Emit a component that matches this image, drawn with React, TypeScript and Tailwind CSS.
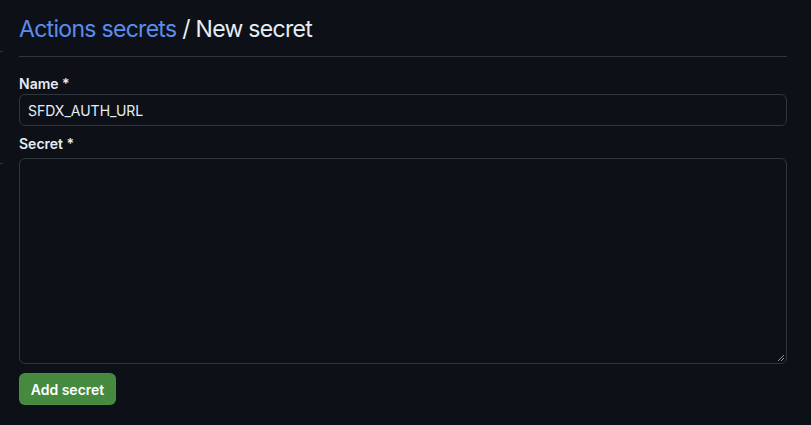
import React from "react";

export default function App() {
  return (
    <div
      className="w-[811px] h-[425px] bg-[#0d1117] flex overflow-hidden"
      style={{ fontFamily: "Inter, 'Noto Sans', sans-serif" }}
    >
      <div className="w-[3px] flex flex-col">
        <div className="mt-[51px] h-px bg-[#30363d]" />
        <div className="mt-[111px] h-px bg-[#30363d]" />
      </div>
      <div className="ml-4 mr-6 flex-1 flex flex-col">
        <div className="pt-[11px] pb-[9px] border-b border-[#30363d]">
          <h1 className="text-[23px] leading-[36px] tracking-[-0.7px] font-normal text-[#e6edf3]">
            <span className="text-[#5b8def]">Actions secrets</span> / New secret
          </h1>
        </div>
        <label className="mt-[17px] text-[14px] leading-[20px] font-semibold text-[#e6edf3]">
          Name *
        </label>
        <div className="h-8 border border-[#30363d] rounded-md flex items-center px-2 text-[14px] text-[#e6edf3]">
          SFDX_AUTH_URL
        </div>
        <label className="mt-2 mb-1 text-[14px] leading-[20px] font-semibold text-[#e6edf3]">
          Secret *
        </label>
        <div className="relative h-[206px] border border-[#30363d] rounded-md">
          <svg
            className="absolute right-[1px] bottom-[1px]"
            width="8"
            height="8"
            viewBox="0 0 8 8"
          >
            <path d="M7 1L1 7M7 4L4 7" stroke="#8b949e" strokeWidth="1" />
          </svg>
        </div>
        <div className="mt-[9px]">
          <button className="h-8 w-[97px] rounded-md bg-[#468a3f] border border-[#52964a]/40 text-white text-[14px] font-semibold">
            Add secret
          </button>
        </div>
      </div>
    </div>
  );
}
